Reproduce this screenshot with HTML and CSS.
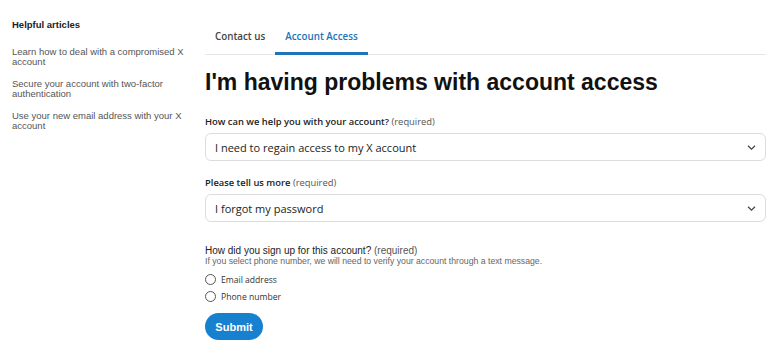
FILE: index.html
```html
<!DOCTYPE html>
<html lang="en">
<head>
<meta charset="utf-8">
<title>Account access</title>
<link rel="stylesheet" href="styles.css">
</head>
<body>
<div class="page">
  <aside class="sidebar">
    <h3 class="side-title">Helpful articles</h3>
    <ul class="side-links">
      <li><a href="#">Learn how to deal with a compromised X account</a></li>
      <li><a href="#">Secure your account with two-factor authentication</a></li>
      <li><a href="#">Use your new email address with your X account</a></li>
    </ul>
  </aside>
  <main class="main">
    <nav class="tabs">
      <a class="tab" href="#">Contact us</a>
      <a class="tab active" href="#">Account Access</a>
    </nav>
    <h1 class="title">I'm having problems with account access</h1>
    <form class="form">
      <div class="field">
        <label class="label">How can we help you with your account? <span class="req">(required)</span></label>
        <div class="select">
          <span>I need to regain access to my X account</span>
          <svg class="chev" viewBox="0 0 9 5" width="9" height="5"><path d="M1 0.8l3.5 3.4 3.5-3.4" fill="none" stroke="#444" stroke-width="1.2"/></svg>
        </div>
      </div>
      <div class="field">
        <label class="label">Please tell us more <span class="req">(required)</span></label>
        <div class="select">
          <span>I forgot my password</span>
          <svg class="chev" viewBox="0 0 9 5" width="9" height="5"><path d="M1 0.8l3.5 3.4 3.5-3.4" fill="none" stroke="#444" stroke-width="1.2"/></svg>
        </div>
      </div>
      <div class="field radios-field">
        <div class="q">How did you sign up for this account? <span class="req">(required)</span></div>
        <div class="hint">If you select phone number, we will need to verify your account through a text message.</div>
        <label class="radio"><span class="circle"></span>Email address</label>
        <label class="radio"><span class="circle"></span>Phone number</label>
      </div>
      <button class="submit" type="button">Submit</button>
    </form>
  </main>
</div>
</body>
</html>
```

FILE: styles.css
```css
* { box-sizing: border-box; }
html, body { margin: 0; padding: 0; background: #fff; }
body { font-family: "Liberation Sans", Arial, sans-serif; color: #0f1419; }
.page { display: flex; padding: 0 14px 0 12px; }
.sidebar { width: 180px; flex: none; padding-top: 19px; }
.side-title { margin: 0 0 17px; font-size: 9.5px; font-weight: bold; color: #222; }
.side-links { list-style: none; margin: 0; padding: 0; display: flex; flex-direction: column; gap: 12px; }
.side-links a { font-size: 9.5px; line-height: 10px; color: #555; text-decoration: none; display: block; }
.main { flex: 1; margin-left: 13px; }
.tabs { display: flex; border-bottom: 1px solid #e6e6e6; padding-top: 30px; }
.tab { font-family: "Open Sans", sans-serif; font-weight: 600; font-size: 9.8px; color: #444; text-decoration: none; padding: 0 10px 9px; border-bottom: 3px solid transparent; margin-bottom: -1px; }
.tab.active { color: #1d74b8; border-bottom-color: #1d74b8; }
.title { margin: 14px 0 0; font-size: 23px; font-weight: bold; color: #111; }
.form { margin-top: 19px; }
.field { margin-bottom: 15px; }
.label { display: block; font-family: "Open Sans", sans-serif; font-weight: 600; font-size: 9.4px; color: #222; margin-bottom: 5px; }
.req { font-weight: normal; color: #555; }
.select { display: flex; align-items: center; justify-content: space-between; height: 28px; border: 1px solid #dcdcdc; border-radius: 6px; padding: 0 9px 0 9px; font-family: "Open Sans", sans-serif; font-size: 11px; color: #222; }
.chev { flex: none; }
.radios-field { margin-top: 23px; margin-bottom: 8px; }
.q { display: block; margin-bottom: 0; font-family: "Liberation Sans", Arial, sans-serif; font-weight: normal; font-size: 10px; color: #222; }
.hint { font-size: 8.7px; color: #666; margin-bottom: 5px; }
.radio { display: flex; align-items: center; gap: 5px; font-family: "Open Sans", sans-serif; font-size: 8.6px; color: #333; height: 17px; }
.circle { width: 11px; height: 11px; border: 1px solid #555; border-radius: 50%; }
.submit { display: block; margin-top: 0; width: 58px; height: 27px; border: 0; border-radius: 14px; background: #1781d0; color: #fff; font-family: "Liberation Sans", Arial, sans-serif; font-weight: bold; font-size: 11px; }
```
